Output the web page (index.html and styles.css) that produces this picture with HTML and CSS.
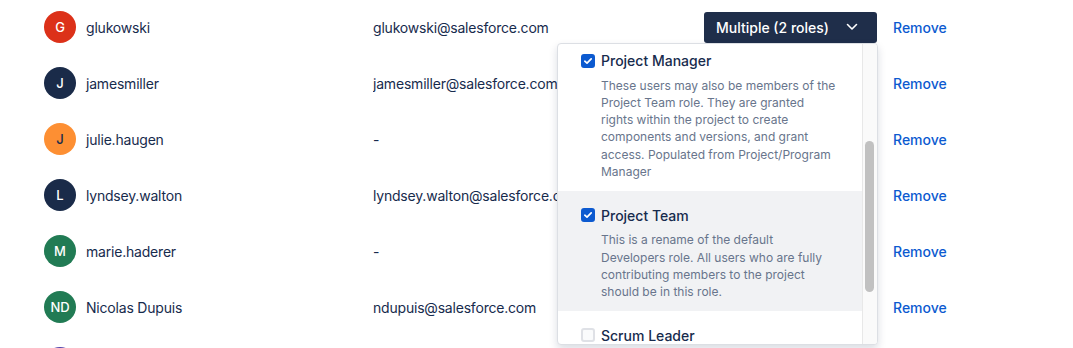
FILE: index.html
```html
<!DOCTYPE html>
<html lang="en">
<head>
  <meta charset="UTF-8">
  <title>Project roles</title>
  <link rel="stylesheet" href="styles.css">
</head>
<body>

<div class="members">

  <div class="member-row">
    <div class="user">
      <span class="avatar red">G</span>
      <span class="name">glukowski</span>
    </div>
    <div class="email">glukowski@salesforce.com</div>
    <div class="role">
      <button class="role-btn">
        <span>Multiple (2 roles)</span>
        <svg width="12" height="8" viewBox="0 0 12 8"><path d="M1.5 1.5 L6 6 L10.5 1.5" fill="none" stroke="#fff" stroke-width="1.6" stroke-linecap="round" stroke-linejoin="round"/></svg>
      </button>

      <div class="role-menu">
        <div class="menu-scroll">
          <div class="menu-list">
            <div class="menu-item">
              <div class="item-head">
                <span class="check on"><svg width="10" height="8" viewBox="0 0 10 8"><path d="M1.8 4.2 L4 6.2 L8.2 1.8" fill="none" stroke="#fff" stroke-width="1.7" stroke-linecap="round" stroke-linejoin="round"/></svg></span>
                <span class="item-title">Project Manager</span>
              </div>
              <p class="item-desc">These users may also be members of the Project Team role. They are granted rights within the project to create components and versions, and grant access. Populated from Project/Program Manager</p>
            </div>
            <div class="menu-item active">
              <div class="item-head">
                <span class="check on"><svg width="10" height="8" viewBox="0 0 10 8"><path d="M1.8 4.2 L4 6.2 L8.2 1.8" fill="none" stroke="#fff" stroke-width="1.7" stroke-linecap="round" stroke-linejoin="round"/></svg></span>
                <span class="item-title">Project Team</span>
              </div>
              <p class="item-desc">This is a rename of the default Developers role. All users who are fully contributing members to the project should be in this role.</p>
            </div>
            <div class="menu-item">
              <div class="item-head">
                <span class="check"></span>
                <span class="item-title">Scrum Leader</span>
              </div>
            </div>
          </div>
        </div>
        <div class="scroll-track"><div class="scroll-thumb"></div></div>
      </div>
    </div>
    <a class="remove" href="#">Remove</a>
  </div>

  <div class="member-row">
    <div class="user">
      <span class="avatar navy">J</span>
      <span class="name">jamesmiller</span>
    </div>
    <div class="email">jamesmiller@salesforce.com</div>
    <div class="role"></div>
    <a class="remove" href="#">Remove</a>
  </div>

  <div class="member-row">
    <div class="user">
      <span class="avatar orange">J</span>
      <span class="name">julie.haugen</span>
    </div>
    <div class="email">-</div>
    <div class="role"></div>
    <a class="remove" href="#">Remove</a>
  </div>

  <div class="member-row">
    <div class="user">
      <span class="avatar navy">L</span>
      <span class="name">lyndsey.walton</span>
    </div>
    <div class="email">lyndsey.walton@salesforce.com</div>
    <div class="role"></div>
    <a class="remove" href="#">Remove</a>
  </div>

  <div class="member-row">
    <div class="user">
      <span class="avatar green">M</span>
      <span class="name">marie.haderer</span>
    </div>
    <div class="email">-</div>
    <div class="role"></div>
    <a class="remove" href="#">Remove</a>
  </div>

  <div class="member-row">
    <div class="user">
      <span class="avatar green">ND</span>
      <span class="name">Nicolas Dupuis</span>
    </div>
    <div class="email">ndupuis@salesforce.com</div>
    <div class="role"></div>
    <a class="remove" href="#">Remove</a>
  </div>

  <div class="member-row">
    <div class="user">
      <span class="avatar purple"></span>
    </div>
  </div>

</div>

</body>
</html>
```

FILE: styles.css
```css
* {
  margin: 0;
  padding: 0;
  box-sizing: border-box;
  font-family: Inter, "Noto Sans", sans-serif;
}

body {
  background: #fff;
  color: #172b4d;
  overflow: hidden;
}

.members {
  height: 349px;
  margin-top: -1px;
  padding-left: 44px;
  overflow: hidden;
}

.member-row {
  display: flex;
  align-items: center;
  height: 56px;
  font-size: 14px;
  letter-spacing: -0.2px;
}

.user {
  width: 329px;
  display: flex;
  align-items: center;
  gap: 10px;
}

.avatar {
  width: 32px;
  height: 32px;
  border-radius: 50%;
  display: flex;
  align-items: center;
  justify-content: center;
  color: #fff;
  font-size: 13px;
  font-weight: 500;
  letter-spacing: 0;
  flex-shrink: 0;
}

.avatar.red { background: #dc3119; }
.avatar.navy { background: #1a2b49; }
.avatar.orange { background: #fd8f33; color: #172b4d; }
.avatar.green { background: #217b54; }
.avatar.purple { background: #5243aa; }

.name {
  color: #172b4d;
}

.email {
  width: 331px;
  white-space: nowrap;
  overflow: hidden;
}

.role {
  width: 173px;
  height: 31px;
  position: relative;
}

.role-btn {
  width: 100%;
  height: 31px;
  border: none;
  border-radius: 3px;
  background: #1f2e4a;
  color: #fff;
  font-size: 14px;
  font-weight: 500;
  display: flex;
  align-items: center;
  justify-content: space-between;
  padding: 0 19px 0 12px;
}

.remove {
  margin-left: 16px;
  color: #0c5ad0;
  font-weight: 500;
  letter-spacing: 0;
  text-decoration: none;
}

.role-menu {
  position: absolute;
  top: 31px;
  right: -1px;
  width: 321px;
  height: 302px;
  background: #fff;
  border: 1px solid #dcdfe4;
  border-radius: 4px;
  box-shadow: 0 4px 8px rgba(9, 30, 66, 0.15);
  display: flex;
  overflow: hidden;
  letter-spacing: 0;
  z-index: 10;
}

.menu-scroll {
  flex: 1;
  overflow: hidden;
}

.menu-list {
  margin-top: -7px;
}

.menu-item {
  padding: 13px 25px 11px 23px;
}

.menu-item.active {
  background: #f1f2f4;
}

.item-head {
  display: flex;
  align-items: center;
  gap: 6px;
  height: 22px;
}

.check {
  width: 14px;
  height: 14px;
  border-radius: 3px;
  border: 2px solid #dfe1e6;
  background: #fafbfc;
  display: flex;
  align-items: center;
  justify-content: center;
}

.check.on {
  background: #0c5ad0;
  border-color: #0c5ad0;
}

.item-title {
  font-size: 14px;
  font-weight: 500;
  color: #172b4d;
}

.item-desc {
  margin-top: 5px;
  padding-left: 20px;
  font-size: 12px;
  line-height: 17.3px;
  color: #68758c;
}

.scroll-track {
  width: 15px;
  background: #fafafa;
  border-left: 1px solid #e8e8e8;
  padding: 97px 0 0 2px;
}

.scroll-thumb {
  width: 9px;
  height: 151px;
  border-radius: 5px;
  background: #c1c1c1;
}
```
